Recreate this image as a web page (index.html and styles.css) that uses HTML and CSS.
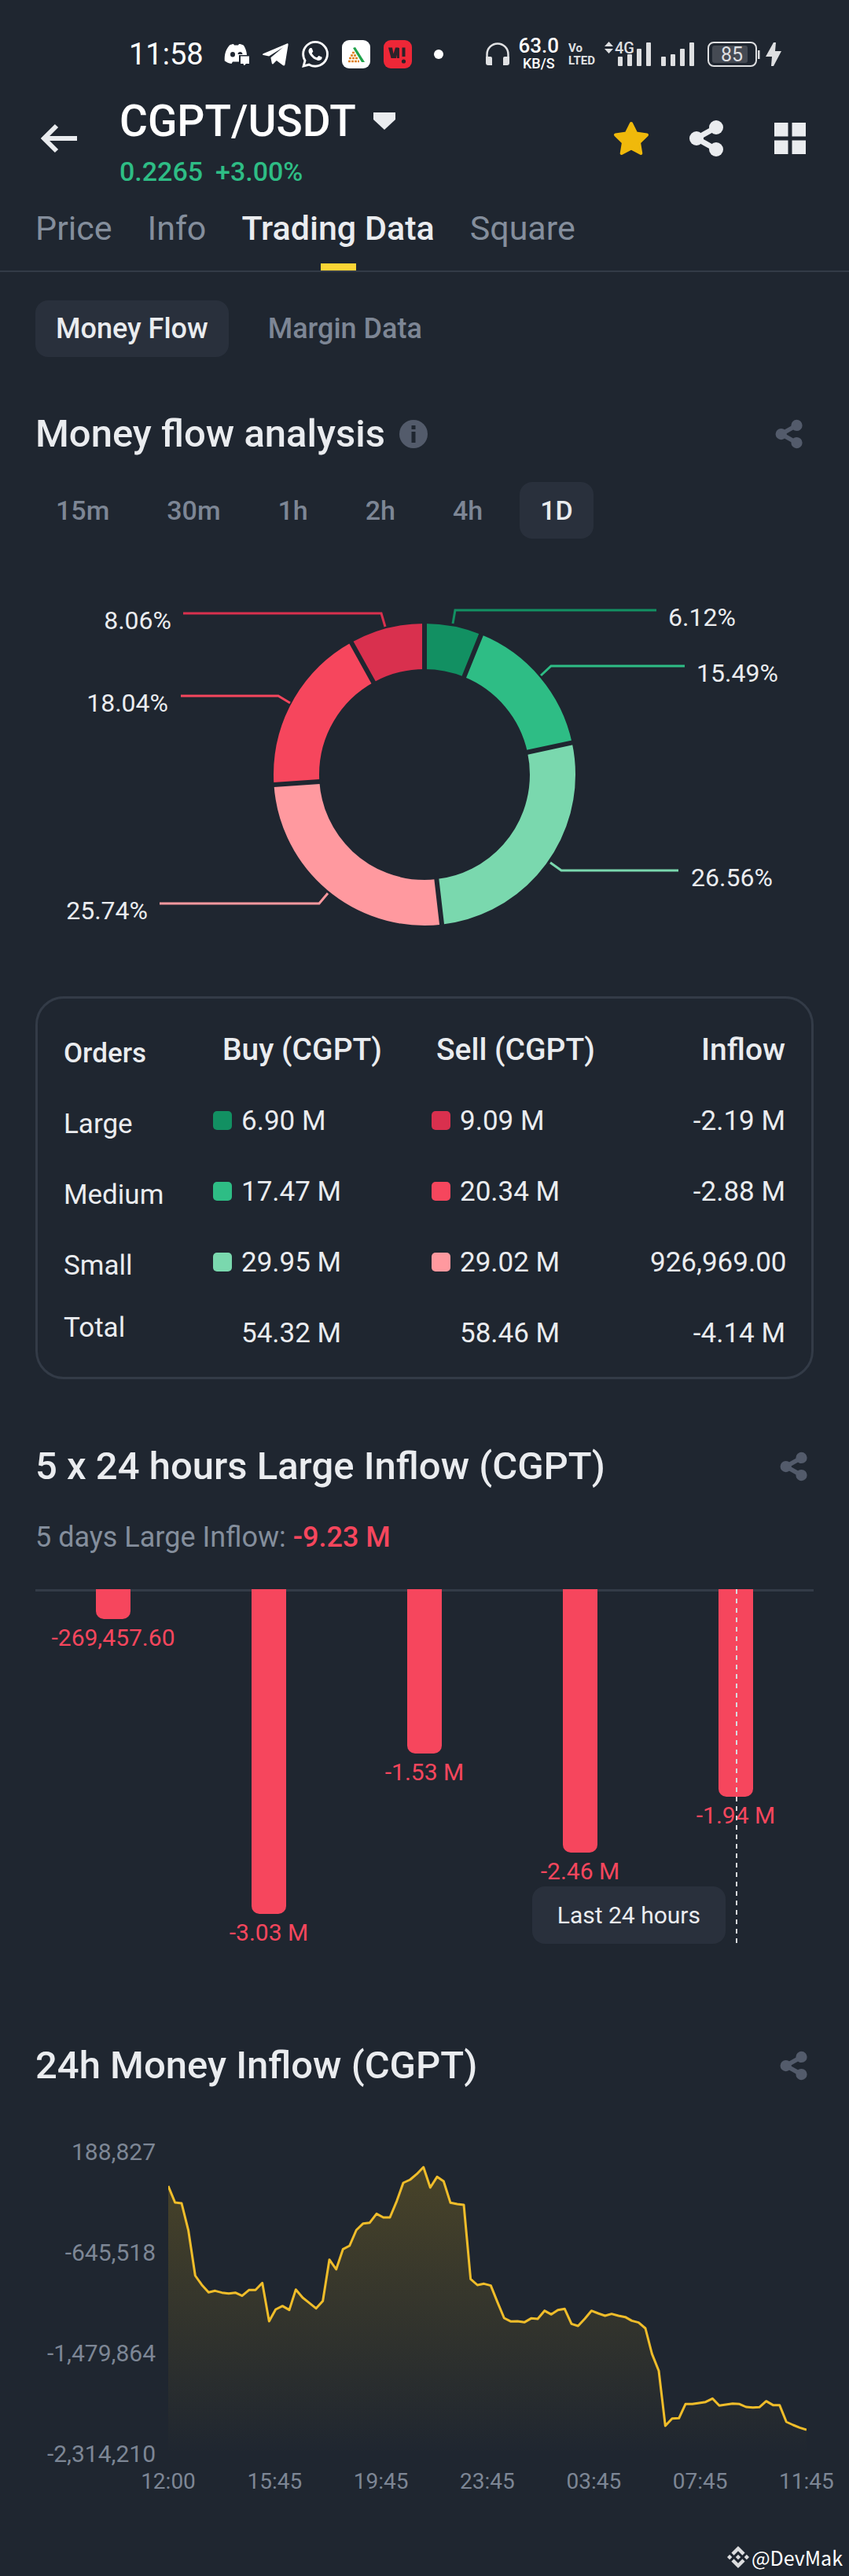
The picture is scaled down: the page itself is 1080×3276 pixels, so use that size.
FILE: index.html
```html
<!DOCTYPE html>
<html lang="en">
<head>
<meta charset="utf-8">
<meta name="viewport" content="width=device-width, initial-scale=1">
<title>CGPT/USDT Trading Data</title>
<link rel="stylesheet" href="styles.css">
</head>
<body>
<svg class="defs" width="0" height="0" aria-hidden="true">
  <symbol id="share" viewBox="0 0 48 48">
    <path d="M36 10 11 24 36 38" fill="none" stroke="currentColor" stroke-width="7"/>
    <circle cx="11" cy="24" r="9"/><circle cx="36" cy="10" r="9"/><circle cx="36" cy="38" r="9"/>
  </symbol>
</svg>

<div class="status">
  <div class="status-left">
    <span class="clock">11:58</span>
    <svg width="32" height="28" viewBox="0 0 32 28" fill="#fff"><path fill-rule="evenodd" d="M7 2.500C9 1.500 11 1 12 1l1 1.500h5L19 1c2 0 4 .7 6 1.700 2.500 3.800 3.800 7.800 4 12.300H19v8.500h-8L9.500 26C6 25.500 3 24 .8 22.500.2 15 2 8 7 2.500ZM11 11a3 3.300 0 1 0 0 6.600 3 3.300 0 0 0 0-6.600Zm9.500 0c-1.700 0-2.900 1.300-3 3h6c0-1.700-1.300-3-3-3Z"/><path d="M21 16.500h11V26h-4l-2.500 2.500L24.500 26H21Z"/></svg>
    <svg width="33" height="29" viewBox="0 0 33 29" fill="#fff"><path d="M.8 13.300 31 .4c1-.4 1.800.2 1.600 1.500L28.500 27c-.3 1.500-1.500 1.900-2.700 1.100l-8-6-4 4c-.9.9-1.800.6-2-.6l-1.400-7.200L26 5.200 8.200 16.600.9 14.900C-.3 14.600-.2 13.700.8 13.300Z"/></svg>
    <svg width="34" height="34" viewBox="0 0 24 24" fill="#fff"><path d="M17.472 14.382c-.297-.149-1.758-.867-2.030-.967-.273-.099-.471-.148-.67.15-.197.297-.767.966-.94 1.164-.173.199-.347.223-.644.075-.297-.15-1.255-.463-2.390-1.475-.883-.788-1.480-1.761-1.653-2.059-.173-.297-.018-.458.13-.606.134-.133.298-.347.446-.52.149-.174.198-.298.298-.497.099-.198.05-.371-.025-.52-.075-.149-.669-1.612-.916-2.207-.242-.579-.487-.5-.669-.51-.173-.008-.371-.01-.57-.01-.198 0-.52.074-.792.372-.272.297-1.040 1.016-1.040 2.479 0 1.462 1.065 2.875 1.213 3.074.149.198 2.096 3.200 5.077 4.487.709.306 1.262.489 1.694.625.712.227 1.360.195 1.871.118.571-.085 1.758-.719 2.006-1.413.248-.694.248-1.289.173-1.413-.074-.124-.272-.198-.57-.347m-5.421 7.403h-.004a9.870 9.870 0 0 1-5.031-1.378l-.361-.214-3.741.982.998-3.648-.235-.374a9.860 9.860 0 0 1-1.510-5.260c.001-5.450 4.436-9.884 9.888-9.884 2.640 0 5.122 1.030 6.988 2.898a9.825 9.825 0 0 1 2.893 6.994c-.003 5.450-4.437 9.884-9.885 9.884m8.413-18.297A11.815 11.815 0 0 0 12.050 0C5.495 0 .16 5.335.157 11.892c0 2.096.547 4.142 1.588 5.945L.057 24l6.305-1.654a11.882 11.882 0 0 0 5.683 1.448h.005c6.554 0 11.890-5.335 11.893-11.893a11.821 11.821 0 0 0-3.480-8.413z"/></svg>
    <svg width="36" height="36" viewBox="0 0 36 36"><rect width="36" height="36" rx="9" fill="#fff"/><path d="m14 10 3-1 12 19h-4Z" fill="#1fa24a"/><path d="M8 27h14M9 23h12M11 19.500h8M13 16h4" stroke="#df8423" stroke-width="2.500" stroke-dasharray="3 1"/></svg>
    <svg width="36" height="36" viewBox="0 0 36 36"><rect width="36" height="36" rx="9" fill="#ee2737"/><path d="M6 9.500h5l1.500 8 2.500-8h4l-3 13.500H9.500ZM17 10h3v13h-3ZM23.500 9.500h4V21h-4Z" fill="#2b2229"/><circle cx="25.500" cy="27" r="2.600" fill="#2b2229"/></svg>
    <i class="dot"></i>
  </div>
  <div class="status-right">
    <svg width="30" height="30" viewBox="0 0 30 30"><path d="M1.500 22V15a13.500 13.500 0 0 1 27 0v7" fill="none" stroke="#e0e1e3" stroke-width="2.500"/><path d="M0 18h6a2 2 0 0 1 2 2v9H3a3 3 0 0 1-3-3ZM30 18h-6a2 2 0 0 0-2 2v9h5a3 3 0 0 0 3-3Z" fill="#e0e1e3"/></svg>
    <span class="speed">63.0<br><small>KB/S</small></span>
    <span class="volte">Vo<br>LTED</span>
    <svg width="60" height="40" viewBox="0 -4 60 40" fill="#dedfe1"><path d="m5.500 0 5.500 6H0ZM5.500 15 0 9h11Z"/><rect x="17" y="19" width="6" height="12" rx="1"/><rect x="29" y="16" width="6" height="15" rx="1"/><rect x="41" y="9" width="6" height="22" rx="1"/><rect x="53" y="1" width="6" height="30" rx="1"/><text x="13" y="15" class="net">4G</text></svg>
    <svg width="43" height="32" viewBox="0 0 43 32" fill="#dedfe1"><rect y="19" width="6" height="12" rx="1"/><rect x="12" y="16" width="6" height="15" rx="1"/><rect x="24" y="9" width="6" height="22" rx="1"/><rect x="36" y="1" width="6" height="30" rx="1"/></svg>
    <svg class="battery" width="94" height="32" viewBox="0 0 94 32"><rect x="1" y="1" width="61" height="30" rx="7" fill="none" stroke="#dedfe1" stroke-width="2"/><rect x="6" y="5" width="45" height="22" rx="3" fill="#454a53"/><path d="M64 11h2.500v11H64Z" fill="#dedfe1"/><text x="31" y="25" text-anchor="middle" class="charge">85</text><path d="M84 1 74 19h8l-1 12h3L94 12h-8l1-11Z" fill="#dedfe1"/></svg>
  </div>
</div>

<header class="top">
  <button class="icon-btn" aria-label="Back"><svg width="46" height="38" viewBox="0 0 46 38" fill="none" stroke="#eaecef" stroke-width="6"><path d="M4 19h42M20 3 4 19l16 16"/></svg></button>
  <div class="pair">
    <h1><button class="pair-btn">CGPT/USDT<svg width="28" height="22" viewBox="0 0 28 22" fill="#eaecef"><path d="M0 0h28v9L14 22 0 9Z"/></svg></button></h1>
    <p class="price"><span>0.2265</span><span>+3.00%</span></p>
  </div>
  <div class="actions">
    <button class="icon-btn" aria-label="Favourite"><svg width="48" height="48" viewBox="0 0 48 48"><path d="M24 5 30.200 17.500 44 19.500 34 29.200 36.300 43 24 36.500 11.700 43 14 29.200 4 19.500 17.800 17.500Z" fill="#f0b90b" stroke="#f0b90b" stroke-width="4" stroke-linejoin="round"/></svg></button>
    <button class="icon-btn" aria-label="Share"><svg width="48" height="48" fill="currentColor"><use href="#share"/></svg></button>
    <button class="icon-btn grid-btn" aria-label="More"><svg width="40" height="40" viewBox="0 0 40 40" fill="#eaecef"><path d="M0 0h17.500v17.500H0ZM22.500 0H40v17.500H22.500ZM0 22.500h17.500V40H0ZM22.500 22.500H40V40H22.500Z"/></svg></button>
  </div>
</header>

<nav class="tabs">
  <a href="#price">Price</a>
  <a href="#info">Info</a>
  <a href="#trading" class="active" aria-current="page">Trading Data</a>
  <a href="#square">Square</a>
</nav>

<main>
  <div class="pills">
    <button class="pill on">Money Flow</button>
    <button class="pill">Margin Data</button>
  </div>

  <section class="analysis">
    <div class="section-head inset">
      <h2>Money flow analysis</h2>
      <button class="info" aria-label="About money flow"><svg width="36" height="36" viewBox="0 0 36 36"><circle cx="18" cy="18" r="18" fill="#535b6b"/><path d="M15.500 7h5v5h-5ZM15.500 15h5v14h-5Z" fill="#1f2630"/></svg></button>
      <button class="share" aria-label="Share"><svg width="38" height="38" fill="currentColor"><use href="#share"/></svg></button>
    </div>
    <div class="periods">
      <button class="pill">15m</button>
      <button class="pill">30m</button>
      <button class="pill">1h</button>
      <button class="pill">2h</button>
      <button class="pill">4h</button>
      <button class="pill on">1D</button>
    </div>
    <svg class="donut" viewBox="45 700 990 530" role="img" aria-label="Share of orders by size">
      <g fill="none" stroke-width="58" transform="rotate(-90 540 985)">
        <circle cx="540" cy="985" r="163" pathLength="100" stroke="#129062" stroke-dasharray="6.120 100"/>
        <circle cx="540" cy="985" r="163" pathLength="100" stroke="#2ebd85" stroke-dasharray="15.490 100" stroke-dashoffset="-6.120"/>
        <circle cx="540" cy="985" r="163" pathLength="100" stroke="#7ad8ae" stroke-dasharray="26.560 100" stroke-dashoffset="-21.610"/>
        <circle cx="540" cy="985" r="163" pathLength="100" stroke="#ff999f" stroke-dasharray="25.740 100" stroke-dashoffset="-48.170"/>
        <circle cx="540" cy="985" r="163" pathLength="100" stroke="#f6465d" stroke-dasharray="18.040 100" stroke-dashoffset="-73.910"/>
        <circle cx="540" cy="985" r="163" pathLength="100" stroke="#d9304e" stroke-dasharray="8.050 100" stroke-dashoffset="-91.950"/>
      </g>
      <path d="M540 789v66M588.800 864.500 613.500 803.300M667.100 957.500 731.600 943.600M554.900 1114.100 562.500 1179.700M410.300 993.800 344.500 998.300M477 871.300 445 813.600" stroke="#1f2630" stroke-width="6"/>
      <g fill="none" stroke-width="3">
        <path d="M233 780H485L490 797" stroke="#d9304e"/>
        <path d="M230 885H354L369 894" stroke="#f6465d"/>
        <path d="M203 1149H406L417 1136" stroke="#ff999f"/>
        <path d="M576 793 579 776H835" stroke="#129062"/>
        <path d="M688 859 701 847H871" stroke="#2ebd85"/>
        <path d="M700 1097 714 1107H863" stroke="#7ad8ae"/>
      </g>
      <g class="slice">
        <g text-anchor="end"><text x="218" y="800">8.06%</text><text x="214" y="905">18.04%</text><text x="188" y="1169">25.74%</text></g>
        <text x="850" y="796">6.12%</text><text x="886" y="867">15.49%</text><text x="879" y="1127">26.56%</text>
      </g>
    </svg>
    <div class="card">
      <table>
        <thead>
          <tr><th scope="col" class="name">Orders</th><th scope="col" class="buy">Buy (CGPT)</th><th scope="col" class="sell">Sell (CGPT)</th><th scope="col" class="net-in">Inflow</th></tr>
        </thead>
        <tbody>
          <tr><th scope="row">Large</th><td><i class="sw buy-l"></i>6.90 M</td><td><i class="sw sell-l"></i>9.09 M</td><td>-2.19 M</td></tr>
          <tr><th scope="row">Medium</th><td><i class="sw buy-m"></i>17.47 M</td><td><i class="sw sell-m"></i>20.34 M</td><td>-2.88 M</td></tr>
          <tr><th scope="row">Small</th><td><i class="sw buy-s"></i>29.95 M</td><td><i class="sw sell-s"></i>29.02 M</td><td>926,969.00</td></tr>
          <tr class="total"><th scope="row">Total</th><td><i class="sw"></i>54.32 M</td><td><i class="sw"></i>58.46 M</td><td>-4.14 M</td></tr>
        </tbody>
      </table>
    </div>
  </section>

  <section class="large">
    <div class="section-head">
      <h2>5 x 24 hours Large Inflow (CGPT)</h2>
      <button class="share" aria-label="Share"><svg width="38" height="38" fill="currentColor"><use href="#share"/></svg></button>
    </div>
    <p class="sum">5 days Large Inflow: <b>-9.23 M</b></p>
    <div class="bars">
      <div class="col"><div class="bar" style="height:38px"></div><span>-269,457.60</span></div>
      <div class="col"><div class="bar" style="height:413px"></div><span>-3.03 M</span></div>
      <div class="col"><div class="bar" style="height:209px"></div><span>-1.53 M</span></div>
      <div class="col"><div class="bar" style="height:335px"></div><span>-2.46 M</span></div>
      <div class="col"><div class="bar" style="height:264px"></div><span>-1.94 M</span></div>
      <div class="marker"></div>
      <div class="tip">Last 24 hours</div>
    </div>
  </section>

  <section class="daily">
    <div class="section-head">
      <h2>24h Money Inflow (CGPT)</h2>
      <button class="share" aria-label="Share"><svg width="38" height="38" fill="currentColor"><use href="#share"/></svg></button>
    </div>
    <div class="plot">
      <div class="y-axis"><span>188,827</span><span>-645,518</span><span>-1,479,864</span><span>-2,314,210</span></div>
      <svg viewBox="0 0 2436 1203" role="img" aria-label="Money inflow over 24 hours">
        <defs><linearGradient id="fade" gradientUnits="userSpaceOnUse" x1="0" y1="100" x2="0" y2="1203"><stop offset="0" stop-color="#f0b90b" stop-opacity=".2"/><stop offset="1" stop-color="#f0b90b" stop-opacity="0"/></linearGradient></defs>
        <path id="area" fill="url(#fade)" d="M0 1203 0 180 26 243 51 246 77 350 103 522 128 557 154 586 179 580 205 587 231 590 256 587 282 599 308 577 333 577 359 550 385 696 410 651 436 638 462 653 487 575 513 606 538 626 564 647 590 619 615 461 641 498 667 421 692 408 718 348 744 323 769 320 795 286 821 300 846 300 872 238 897 168 923 156 949 134 974 108 1000 186 1026 145 1051 162 1077 244 1103 249 1128 252 1154 535 1180 558 1205 553 1231 560 1256 622 1282 684 1308 697 1333 696 1359 700 1385 685 1410 687 1436 656 1462 670 1487 653 1513 649 1539 706 1564 714 1590 686 1615 656 1641 666 1667 675 1692 668 1718 675 1744 680 1769 694 1795 701 1821 723 1846 820 1872 885 1897 1095 1923 1067 1949 1066 1974 1012 2000 1012 2026 1008 2051 1004 2077 991 2103 1018 2128 1014 2154 1010 2180 1012 2205 1023 2231 1025 2256 1024 2282 1001 2308 1016 2333 1016 2359 1080 2385 1092 2410 1102 2436 1110 2436 1203Z"/>
        <polyline fill="none" stroke="#f0bd2a" stroke-width="9" stroke-linejoin="round" points="0 180 26 243 51 246 77 350 103 522 128 557 154 586 179 580 205 587 231 590 256 587 282 599 308 577 333 577 359 550 385 696 410 651 436 638 462 653 487 575 513 606 538 626 564 647 590 619 615 461 641 498 667 421 692 408 718 348 744 323 769 320 795 286 821 300 846 300 872 238 897 168 923 156 949 134 974 108 1000 186 1026 145 1051 162 1077 244 1103 249 1128 252 1154 535 1180 558 1205 553 1231 560 1256 622 1282 684 1308 697 1333 696 1359 700 1385 685 1410 687 1436 656 1462 670 1487 653 1513 649 1539 706 1564 714 1590 686 1615 656 1641 666 1667 675 1692 668 1718 675 1744 680 1769 694 1795 701 1821 723 1846 820 1872 885 1897 1095 1923 1067 1949 1066 1974 1012 2000 1012 2026 1008 2051 1004 2077 991 2103 1018 2128 1014 2154 1010 2180 1012 2205 1023 2231 1025 2256 1024 2282 1001 2308 1016 2333 1016 2359 1080 2385 1092 2410 1102 2436 1110"/>
      </svg>
    </div>
    <div class="x-axis"><span>12:00</span><span>15:45</span><span>19:45</span><span>23:45</span><span>03:45</span><span>07:45</span><span>11:45</span></div>
  </section>
</main>

<footer>
  <svg width="28" height="28" viewBox="0 0 24 24" fill="#dcdddf"><path d="M16.624 13.920l2.717 2.716-7.353 7.353-7.353-7.352 2.717-2.717 4.636 4.660 4.636-4.660zM21.261 9.284 24 12l-2.715 2.716L18.568 12zM11.989 9.285l2.716 2.691-2.716 2.717L9.272 12zM2.716 9.284 5.409 12l-2.692 2.692L0 12zM11.989.011l7.353 7.329-2.718 2.716-4.635-4.636-4.636 4.660-2.717-2.716z"/></svg>
  <span>@DevMak</span>
</footer>
</body>
</html>
```
FILE: styles.css
```css
* { box-sizing: border-box; }
body {
  margin: 0;
  background: #1f2630;
  color: #eaecef;
  font-family: Roboto, "Liberation Sans", sans-serif;
  font-size: 35px;
}
h1, h2, p { margin: 0; font-weight: 500; }
button {
  margin: 0; padding: 0; border: 0; background: none;
  color: inherit; font: inherit; cursor: pointer;
}
a { color: inherit; text-decoration: none; }
svg { display: block; flex: none; }
.defs { position: absolute; }

/* phone status bar */
.status {
  display: flex; justify-content: space-between; align-items: center;
  height: 46px; margin-top: 46px; padding: 0 86px 0 164px;
  color: #fff;
}
.status-left, .status-right { display: flex; align-items: center; }
.status-left { gap: 17px; }
.clock { font-size: 38px; line-height: 46px; margin-right: 9px; }
.dot { width: 12px; height: 12px; border-radius: 50%; background: #fff; margin-left: 11px; }
.status-right { gap: 12px; }
.battery { margin-left: 4px; }
.speed { font-size: 26px; line-height: 20px; font-weight: 500; text-align: center; }
.speed small { font-size: 18px; }
.volte { font-size: 15px; line-height: 16px; font-weight: 700; color: #e0e1e3; }
.net { font-size: 20px; font-weight: 500; }
.charge { font-size: 25px; fill: #dedfe1; }

/* pair header */
.top { display: flex; align-items: flex-start; padding: 30px 41px 0 52px; }
.icon-btn { display: flex; align-items: center; justify-content: center; height: 108px; }
.grid-btn { width: 68px; }
.pair { margin-left: 54px; }
.pair-btn { display: flex; align-items: center; gap: 22px; color: #fff; }
h1 { font-size: 55px; line-height: 64px; }
.price { display: flex; gap: 16px; margin-top: 12px; font-size: 34px; line-height: 40px; color: #2ebd85; }
.actions { display: flex; gap: 48px; margin-left: auto; }

.tabs {
  display: flex; gap: 45px; padding: 22px 45px 0;
  border-bottom: 2px solid #333b47;
  font-size: 43px; line-height: 60px; color: #848e9c;
}
.tabs a { padding-bottom: 24px; }
.tabs .active {
  color: #eaecef; font-weight: 500;
  background: linear-gradient(#fcd535, #fcd535) center bottom / 45px 9px no-repeat;
}

main { padding: 36px 45px 0; }
.pills, .periods { display: flex; }
.pills { gap: 24px; font-size: 36px; }
.periods { gap: 21px; margin-top: 31px; font-size: 34px; }
.pill { height: 72px; padding: 0 26px; border-radius: 16px; font-weight: 500; color: #7d8695; }
.pill.on { background: #29303c; color: #eaecef; }

.section-head { display: flex; align-items: center; padding-right: 6px; }
.section-head.inset { padding-right: 12px; }
h2 { font-size: 49px; line-height: 60px; }
.info { margin-left: 18px; }
.share { margin-left: auto; color: #535b6b; }
.analysis { margin-top: 68px; }
.donut { width: 100%; margin-top: 15px; }
.slice { font-size: 32px; fill: #eaecef; }

/* order table */
.card { margin-top: 37px; padding: 20px 33px 11px; border: 3px solid #333b47; border-radius: 36px; }
table { width: 100%; border-collapse: collapse; table-layout: fixed; }
th, td { height: 90px; padding: 0; text-align: left; vertical-align: middle; font-weight: 400; white-space: nowrap; }
thead th { font-size: 39px; font-weight: 500; }
thead .name { width: 190px; font-size: 35px; }
.buy { padding-left: 12px; width: 278px; }
.sell { padding-left: 6px; width: 278px; }
th:last-child, td:last-child { text-align: right; }
.name, tbody th { padding-top: 9px; }
.total th { padding: 0 0 14px; }
.sw { display: inline-block; width: 24px; height: 24px; margin-right: 12px; border-radius: 5px; }
.buy-l { background: #129062; }
.buy-m { background: #2ebd85; }
.buy-s { background: #7ad8ae; }
.sell-l { background: #d9304e; }
.sell-m { background: #f6465d; }
.sell-s { background: #ff999f; }

/* five-day bars */
.large { margin-top: 81px; }
.sum { margin-top: 36px; font-size: 36px; line-height: 48px; font-weight: 400; color: #848e9c; }
.sum b { font-weight: 500; color: #f6465d; }
.bars {
  position: relative; display: grid; grid-template-columns: repeat(5, 1fr);
  height: 451px; margin-top: 42px;
  background: linear-gradient(#333b47, #333b47) top / 100% 3px no-repeat;
}
.col { display: flex; flex-direction: column; align-items: center; gap: 6px; font-size: 30px; line-height: 36px; color: #f6465d; }
.bar { flex: none; width: 44px; border-radius: 0 0 10px 10px; background: #f6465d; }
.marker {
  position: absolute; top: 0; bottom: 0; left: 90%; width: 2px;
  background: repeating-linear-gradient(#d7d9dc 0 6px, transparent 6px 12px);
}
.tip {
  position: absolute; right: calc(10% + 13px); bottom: 0;
  padding: 0 32px; border-radius: 16px; background: #29303c;
  font-size: 30px; line-height: 73px;
}

/* 24h line */
.daily { margin-top: 125px; }
.plot { display: flex; align-items: flex-start; gap: 16px; margin-top: 63px; padding-right: 9px; color: #7d8695; }
.plot svg { flex: 1; min-width: 0; }
.y-axis { display: flex; flex-direction: column; gap: 94px; width: 153px; font-size: 30px; line-height: 34px; text-align: right; }
.x-axis { display: flex; justify-content: space-between; margin: 0 -27px 0 133px; font-size: 28px; line-height: 36px; color: #7d8695; }
.x-axis span { width: 72px; text-align: center; }

footer {
  display: flex; justify-content: flex-end; align-items: center; gap: 3px;
  margin-top: 60px; padding: 0 8px 6px;
  font: 25px/36px "Noto Sans CJK SC", "Noto Sans", sans-serif; color: #fff;
}
```
